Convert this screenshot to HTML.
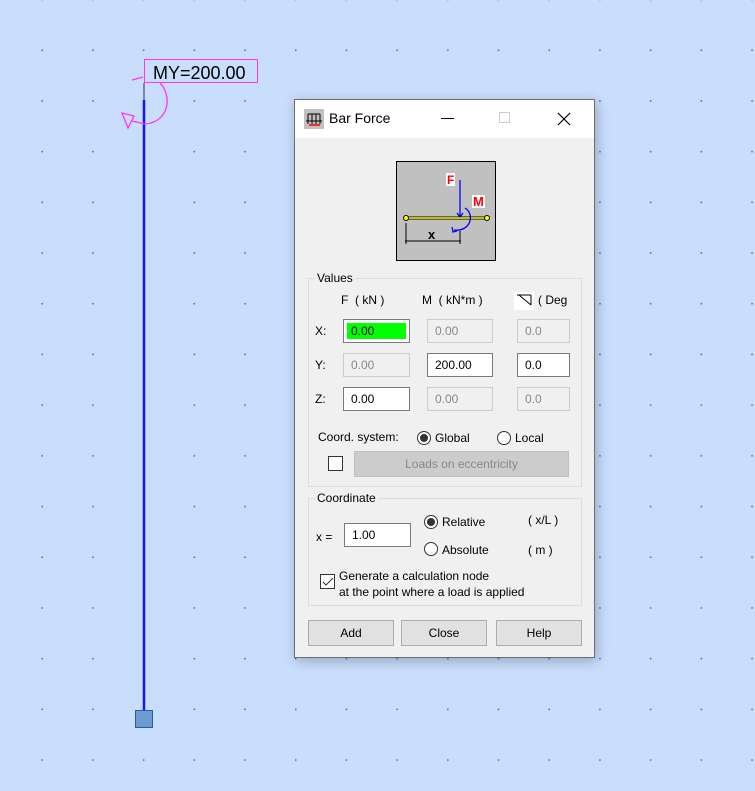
<!DOCTYPE html>
<html><head><meta charset="utf-8"><style>
*{margin:0;padding:0;box-sizing:border-box}
body{width:755px;height:791px;background:#c9ddfd;position:relative;overflow:hidden;font-family:"Liberation Sans",sans-serif;font-size:12px;color:#000}
.a{position:absolute}
.dlg{left:294px;top:99px;width:301px;height:559px;background:#f0f0f0;border:1px solid #6e6e6e;box-shadow:2px 3px 12px rgba(0,0,0,.25)}
.tb{left:0;top:0;width:299px;height:38px;background:#fff}
.in{position:absolute;height:24px;border:1px solid #7a7a7a;background:#fff;padding:4px 0 0 7px;font-size:12px}
.in.d{border-color:#ccc;background:#f0f0f0;color:#888}
.grp{position:absolute;border:1px solid #dcdcdc}
.gl{position:absolute;background:#f0f0f0;padding:0 2px;top:-8px;left:6px}
.btn{position:absolute;height:26px;background:#e1e1e1;border:1px solid #adadad;text-align:center;padding-top:5px}
.rad{position:absolute;width:14px;height:14px;border:1px solid #333;border-radius:50%;background:#fff}
.rad.on::after{content:"";position:absolute;left:2px;top:2px;width:8px;height:8px;border-radius:50%;background:#333}
</style></head><body>
<svg class="a" style="left:0;top:0" width="755" height="791">
<defs><pattern id="g" x="41.5" y="49.5" width="50.7" height="50.7" patternUnits="userSpaceOnUse"><rect width="1.5" height="1.5" fill="#4a5cf0"/></pattern></defs>
<rect width="755" height="791" fill="url(#g)"/>
<line x1="144" y1="100" x2="144" y2="712" stroke="#1414ff" stroke-width="2.5"/>
<line x1="144" y1="83" x2="144" y2="100" stroke="#333" stroke-width="1"/>
<rect x="135.5" y="710.5" width="17" height="17" fill="#6e9cd2" stroke="#2b5d99"/>
<rect x="144.5" y="59.5" width="113" height="23" fill="#c9ddfd" stroke="#ff33ff"/>
<text x="153" y="79" font-family="Liberation Sans" font-size="18">MY=200.00</text>
<path d="M132 80 L143 77 M160 83 C172 95 170 122 145 124 L132 121" fill="none" stroke="#ff33ff" stroke-width="1.3"/>
<path d="M122 113 L134 116 L128 128 Z" fill="none" stroke="#ff33ff" stroke-width="1.3"/>
</svg>
<div class="a dlg">
 <div class="a tb"></div>
 <div class="a" style="left:9px;top:9px;width:20px;height:20px;background:#c0c0c0"></div>
 <svg class="a" style="left:9px;top:9px" width="20" height="20"><path d="M4 5H16M4 5V15M16 5V15M8 5V15M12 5V15M2 12H18" fill="none" stroke="#000"/><line x1="5" y1="16" x2="16" y2="16" stroke="red" stroke-width="1.5"/></svg>
 <div class="a" style="left:34px;top:10px;font-size:14px">Bar Force</div>
 <div class="a" style="left:146px;top:18px;width:13px;height:1px;background:#000"></div>
 <div class="a" style="left:204px;top:12px;width:11px;height:11px;border:1px solid #ccc"></div>
 <svg class="a" style="left:262px;top:12px" width="14" height="14"><path d="M1 1L13 13M13 1L1 13" stroke="#000" stroke-width="1.2"/></svg>
 <svg class="a" style="left:101px;top:61px" width="101" height="101">
  <rect x=".5" y=".5" width="99" height="99" fill="#c0c0c0" stroke="#000"/>
  <rect x="50" y="12" width="9" height="13" fill="#fff"/><text x="51" y="23" font-size="12" font-weight="bold" fill="red">F</text>
  <rect x="76" y="34" width="13" height="13" fill="#fff"/><text x="77" y="45" font-size="13" font-weight="bold" fill="red">M</text>
  <line x1="64" y1="19" x2="64" y2="55" stroke="#0000ff" stroke-width="1.3"/><path d="M61 52L64 56L67 52" stroke="#0000ff" fill="none" stroke-width="1.3"/>
  <line x1="10" y1="57" x2="91" y2="57" stroke="#000" stroke-width="3"/><line x1="10" y1="57" x2="91" y2="57" stroke="#ff0" stroke-width="1.5"/>
  <circle cx="10" cy="57" r="2.5" fill="#ff0" stroke="#000"/><circle cx="91" cy="57" r="2.5" fill="#ff0" stroke="#000"/>
  <path d="M69 47C79 53 75 71 58 69 M56 66L57 71L61 70" stroke="#0000ff" fill="none" stroke-width="1.3"/>
  <line x1="10" y1="62" x2="10" y2="83" stroke="#000"/><line x1="64" y1="70" x2="64" y2="83" stroke="#000"/><line x1="9" y1="80" x2="65" y2="80" stroke="#000"/>
  <text x="32" y="78" font-size="13" font-weight="bold">x</text>
 </svg>
 <div class="grp" style="left:13px;top:178px;width:274px;height:209px"><span class="gl">Values</span></div>
 <div class="a" style="left:46px;top:193px">F &nbsp;( kN )</div>
 <div class="a" style="left:127px;top:193px">M &nbsp;( kN*m )</div>
 <div class="a" style="left:219px;top:192px;width:20px;height:18px;background:#fff"></div>
 <svg class="a" style="left:221px;top:194px" width="16" height="12"><path d="M1 1H15M3 1L15 11M15 1V11M3 1L9 6" fill="none" stroke="#000"/></svg>
 <div class="a" style="left:243px;top:193px">( Deg</div>
 <div class="a" style="left:20px;top:224px">X:</div>
 <div class="a" style="left:20px;top:258px">Y:</div>
 <div class="a" style="left:20px;top:292px">Z:</div>
 <div class="in" style="left:48px;top:219px;width:67px;padding:3px 3px 0 3px"><div style="background:#00ff00;height:16px;padding:1px 0 0 4px">0.00</div></div>
 <div class="in d" style="left:132px;top:219px;width:66px">0.00</div>
 <div class="in d" style="left:222px;top:219px;width:53px">0.0</div>
 <div class="in d" style="left:48px;top:253px;width:67px">0.00</div>
 <div class="in" style="left:132px;top:253px;width:66px">200.00</div>
 <div class="in" style="left:222px;top:253px;width:53px">0.0</div>
 <div class="in" style="left:48px;top:287px;width:67px">0.00</div>
 <div class="in d" style="left:132px;top:287px;width:66px">0.00</div>
 <div class="in d" style="left:222px;top:287px;width:53px">0.0</div>
 <div class="a" style="left:23px;top:330px">Coord. system:</div>
 <div class="rad on" style="left:122px;top:331px"></div><div class="a" style="left:140px;top:331px">Global</div>
 <div class="rad" style="left:202px;top:331px"></div><div class="a" style="left:220px;top:331px">Local</div>
 <div class="a" style="left:33px;top:356px;width:15px;height:15px;border:1px solid #333;background:#fff"></div>
 <div class="btn" style="left:59px;top:351px;width:215px;color:#888;background:#ccc;border-color:#bfbfbf">Loads on eccentricity</div>
 <div class="grp" style="left:13px;top:398px;width:274px;height:108px"><span class="gl">Coordinate</span></div>
 <div class="a" style="left:21px;top:430px">x =</div>
 <div class="in" style="left:49px;top:423px;width:67px">1.00</div>
 <div class="rad on" style="left:129px;top:415px"></div><div class="a" style="left:147px;top:415px">Relative</div>
 <div class="a" style="left:233px;top:413px">( x/L )</div>
 <div class="rad" style="left:129px;top:442px"></div><div class="a" style="left:147px;top:443px">Absolute</div>
 <div class="a" style="left:233px;top:443px">( m )</div>
 <div class="a" style="left:25px;top:474px;width:15px;height:15px;border:1px solid #333;background:#fff"></div>
 <svg class="a" style="left:27px;top:477px" width="12" height="10"><path d="M1 5L4 8L11 1" fill="none" stroke="#333"/></svg>
 <div class="a" style="left:44px;top:468px;line-height:16px">Generate a calculation node<br>at the point where a load is applied</div>
 <div class="btn" style="left:13px;top:520px;width:86px">Add</div>
 <div class="btn" style="left:106px;top:520px;width:86px">Close</div>
 <div class="btn" style="left:201px;top:520px;width:86px">Help</div>
</div>
</body></html>
